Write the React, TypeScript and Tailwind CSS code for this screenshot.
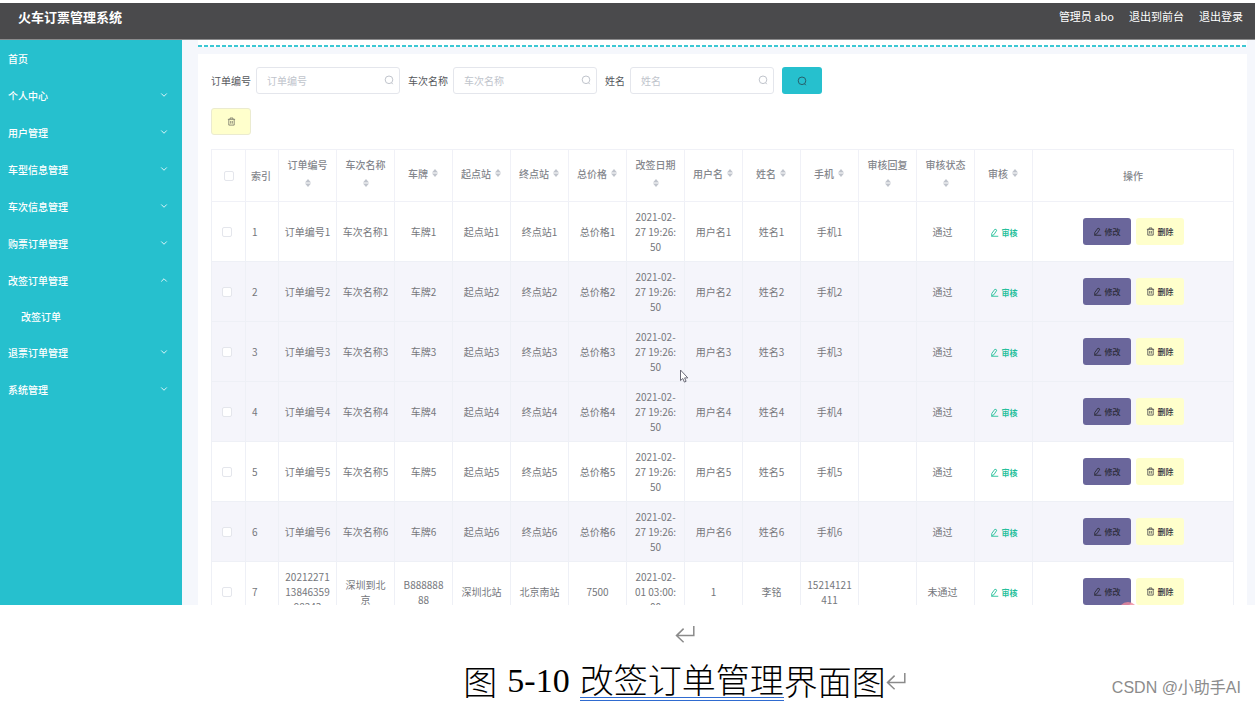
import { ChevronDown, ChevronUp } from "lucide-react";

interface Order {
  index: number;
  cells: string[];
  status: string;
  striped?: boolean;
}

const menu = [
  { title: "首页" },
  { title: "个人中心", children: [] },
  { title: "用户管理", children: [] },
  { title: "车型信息管理", children: [] },
  { title: "车次信息管理", children: [] },
  { title: "购票订单管理", children: [] },
  { title: "改签订单管理", children: ["改签订单"] },
  { title: "退票订单管理", children: [] },
  { title: "系统管理", children: [] },
];

const columns = [
  "订单编号",
  "车次名称",
  "车牌",
  "起点站",
  "终点站",
  "总价格",
  "改签日期",
  "用户名",
  "姓名",
  "手机",
  "审核回复",
  "审核状态",
  "审核",
];

const orders: Order[] = [1, 2, 3, 4, 5, 6].map((n) => ({
  index: n,
  cells: [
    `订单编号${n}`,
    `车次名称${n}`,
    `车牌${n}`,
    `起点站${n}`,
    `终点站${n}`,
    `总价格${n}`,
    "2021-02-\n27 19:26:\n50",
    `用户名${n}`,
    `姓名${n}`,
    `手机${n}`,
    "",
  ],
  status: "通过",
  striped: [2, 3, 4, 6].includes(n),
}));

orders.push({
  index: 7,
  cells: [
    "20212271\n13846359\n98243",
    "深圳到北\n京",
    "B888888\n88",
    "深圳北站",
    "北京南站",
    "7500",
    "2021-02-\n01 03:00:\n00",
    "1",
    "李铭",
    "15214121\n411",
    "",
  ],
  status: "未通过",
});

function SearchIcon() {
  return (
    <svg viewBox="0 0 10 10" className="h-[10px] w-[10px]" fill="none" stroke="currentColor">
      <circle cx="5" cy="4.8" r="3.8" />
      <path d="M7.4 7.6 8.8 9.2" />
    </svg>
  );
}

function TrashIcon() {
  return (
    <svg viewBox="0 0 10 10" className="h-[9px] w-[9px]" fill="none" stroke="currentColor" strokeWidth="0.8">
      <path d="M1 2.6h8M3.4 2.4V1.1h3.2v1.3M2 2.8v6.2h6V2.8M4.1 4.4v3M5.9 4.4v3" />
    </svg>
  );
}

function EditIcon() {
  return (
    <svg viewBox="0 0 10 10" className="h-[9px] w-[9px]" fill="none" stroke="currentColor">
      <path d="M5.6 1.2 7.6 2.4 4.4 7.4 1.8 8.6 2 6 5.6 1.2ZM1.4 9.2h7.8" />
    </svg>
  );
}

function SortIcon() {
  return (
    <svg viewBox="0 0 8 10" className="inline-block h-[10px] w-[8px] align-middle" fill="#c0c4cc">
      <path d="M4 1 7 4.4H1ZM4 9 1 5.6h6Z" />
    </svg>
  );
}

function ReturnMark() {
  return (
    <svg viewBox="0 0 20 18" className="h-[18px] w-[20px]" fill="none" stroke="#8a8a8a" strokeWidth="1.5">
      <path d="M18.8 1v9.6H1.5M8.6 3.6 1.5 10.6l7.1 6.6" />
    </svg>
  );
}

function SearchField({ id, label }: { id: string; label: string }) {
  return (
    <div className="flex items-center gap-[5px]">
      <label htmlFor={id} className="text-[#55575c]">
        {label}
      </label>
      <div className="relative">
        <input
          id={id}
          type="text"
          placeholder={label}
          className="block h-[27px] w-[144px] rounded-[3px] border border-[#e4e6ec] bg-white pl-[10px] pr-6 outline-none placeholder:text-[#c0c4cc]"
        />
        <span className="pointer-events-none absolute right-[6px] top-2 text-[#c0c4cc]">
          <SearchIcon />
        </span>
      </div>
    </div>
  );
}

function Sidebar() {
  return (
    <nav className="w-[182px] shrink-0 bg-[#26c0ce] font-medium text-white">
      <ul>
        {menu.map((item) => {
          const open = !!item.children?.length;
          return (
            <li key={item.title}>
              <a href="#" className="flex h-[37px] items-center justify-between pl-2 pr-[13px]">
                {item.title}
                {item.children &&
                  (open ? (
                    <ChevronUp size={10} strokeWidth={2} className="mb-[2px]" />
                  ) : (
                    <ChevronDown size={10} strokeWidth={2} className="mb-[2px]" />
                  ))}
              </a>
              {item.children?.map((child) => (
                <a key={child} href="#" className="flex h-[35px] items-center pl-[21px]">
                  {child}
                </a>
              ))}
            </li>
          );
        })}
      </ul>
    </nav>
  );
}

function OrderTable() {
  return (
    <table className="mt-[14px] w-full table-fixed border-collapse text-center leading-[15px] text-[#75777c]">
      <colgroup>
        <col className="w-[34px]" />
        <col className="w-[33px]" />
        {columns.map((name) => (
          <col key={name} className="w-[58px]" />
        ))}
        <col />
      </colgroup>
      <thead>
        <tr className="h-[52px] text-[#85878d]">
          <th className="border border-[#f0f1f7]">
            <input
              type="checkbox"
              aria-label="全选"
              className="ml-3 block h-[10px] w-[10px] appearance-none rounded-xs border border-[#e4e6ec] bg-white"
            />
          </th>
          <th className="border border-[#f0f1f7] pl-[5px] text-left font-medium">索引</th>
          {columns.map((name) => (
            <th key={name} className="border border-[#f0f1f7] px-[2px] pb-[6px] font-medium leading-[17px]">
              {name.length > 3 ? (
                <span className="block">{name}</span>
              ) : (
                <span className="mr-[3px] align-middle">{name}</span>
              )}
              <SortIcon />
            </th>
          ))}
          <th className="border border-[#f0f1f7] font-medium">操作</th>
        </tr>
      </thead>
      <tbody>
        {orders.map((order) => (
          <tr key={order.index} className={order.striped ? "h-[60px] bg-[#f5f5fb]" : "h-[60px] bg-white"}>
            <td className="border border-[#eef0f6]">
              <input
                type="checkbox"
                aria-label={`选择第${order.index}行`}
                className="ml-[10px] block h-[10px] w-[10px] appearance-none rounded-xs border border-[#e4e6ec] bg-white"
              />
            </td>
            <td className="border border-[#eef0f6] pl-[6px] text-left">{order.index}</td>
            {order.cells.map((cell, i) => (
              <td key={i} className="whitespace-pre-line border border-[#eef0f6]">
                {cell}
              </td>
            ))}
            <td className="border border-[#eef0f6] pr-[6px]">{order.status}</td>
            <td className="border border-[#eef0f6]">
              <button
                type="button"
                className="inline-flex items-center gap-[3px] align-middle text-[8px] font-bold text-[#27bf9b]"
              >
                <EditIcon />
                审核
              </button>
            </td>
            <td className="border border-[#eef0f6]">
              <div className="flex justify-center gap-[5px] text-[8px] font-medium text-[#2c2c38]">
                <button
                  type="button"
                  className="flex h-[27px] w-12 items-center justify-center gap-[3px] rounded-[3px] bg-[#6a669b]"
                >
                  <EditIcon />
                  修改
                </button>
                <button
                  type="button"
                  className="flex h-[27px] w-12 items-center justify-center gap-[3px] rounded-[3px] bg-[#ffffcc]"
                >
                  <TrashIcon />
                  删除
                </button>
              </div>
            </td>
          </tr>
        ))}
      </tbody>
    </table>
  );
}

export default function App() {
  return (
    <div className="flex h-screen flex-col bg-white pt-[3px] font-['Noto_Sans_CJK_SC',sans-serif] text-[10px]">
      {/* System window */}
      <div className="relative flex min-h-0 flex-1 flex-col overflow-hidden">
        <header className="flex h-[37px] shrink-0 items-start justify-between border-b border-[#8b8b8c] bg-[#4a4a4c] pl-[18px] pr-3 text-white">
          <h1 className="text-[13px] font-bold leading-7">火车订票管理系统</h1>
          <div className="flex gap-[15px] text-[11px] leading-[27px]">
            <span>管理员 abo</span>
            <a href="#">退出到前台</a>
            <a href="#">退出登录</a>
          </div>
        </header>

        <div className="flex min-h-0 flex-1">
          <Sidebar />
          <main className="min-w-0 flex-1 bg-[#f5f7fc] pl-4 pr-2">
            {/* dashed rule under the breadcrumb bar */}
            <div className="h-[7px] bg-white">
              <svg className="block h-full w-full" aria-hidden="true">
                <line x1="0" y1="6" x2="100%" y2="6" stroke="#3cc8d4" strokeWidth="2" strokeDasharray="4 2" />
              </svg>
            </div>
            <div className="mt-[7px] bg-white px-[13px] pt-[13px]">
              <form className="flex items-center gap-2">
                <SearchField id="orderNo" label="订单编号" />
                <SearchField id="trainName" label="车次名称" />
                <SearchField id="realName" label="姓名" />
                <button
                  type="button"
                  aria-label="查询"
                  className="flex h-[27px] w-10 items-center justify-center rounded-[3px] bg-[#26c0ce] text-[#27606c]"
                >
                  <SearchIcon />
                </button>
              </form>
              <button
                type="button"
                aria-label="批量删除"
                className="mt-[14px] flex h-[27px] w-10 items-center justify-center rounded-[3px] border border-[#ebebd0] bg-[#ffffcc] text-[#65655a]"
              >
                <TrashIcon />
              </button>
              <OrderTable />
            </div>
          </main>
        </div>

        {/* mouse pointer and click ripple */}
        <svg viewBox="0 0 10 14" className="absolute left-[679px] top-[366px] h-[14px] w-[10px]" fill="#fff" stroke="#6b6b78">
          <path d="M1.5 1v10.6l2.3-2.1 1.6 3.6 1.7-.8-1.5-3.4h3.2Z" />
        </svg>
        <span className="absolute -bottom-[17px] right-[117px] h-5 w-5 rounded-full bg-[#f08a9c] opacity-80" />
      </div>

      {/* Figure caption */}
      <footer className="relative flex h-[101px] shrink-0 flex-col items-center pl-[114px] pt-5">
        <ReturnMark />
        <div className="mt-[18px] flex items-center text-[34px] font-light leading-[40px] text-black">
          <span>图</span>
          <span className="mx-[10px] font-['Liberation_Serif',serif] font-normal">5-10</span>
          <span className="border-b-4 border-double border-[#2f6bd0] leading-[36px]">改签订单管理</span>
          <span>界面图</span>
          <ReturnMark />
        </div>
        <span className="absolute bottom-[6px] right-[14px] font-['Liberation_Sans','Noto_Sans_CJK_SC',sans-serif] text-[16px] leading-6 text-[#8c8c8c]">
          CSDN @小助手AI
        </span>
      </footer>
    </div>
  );
}
